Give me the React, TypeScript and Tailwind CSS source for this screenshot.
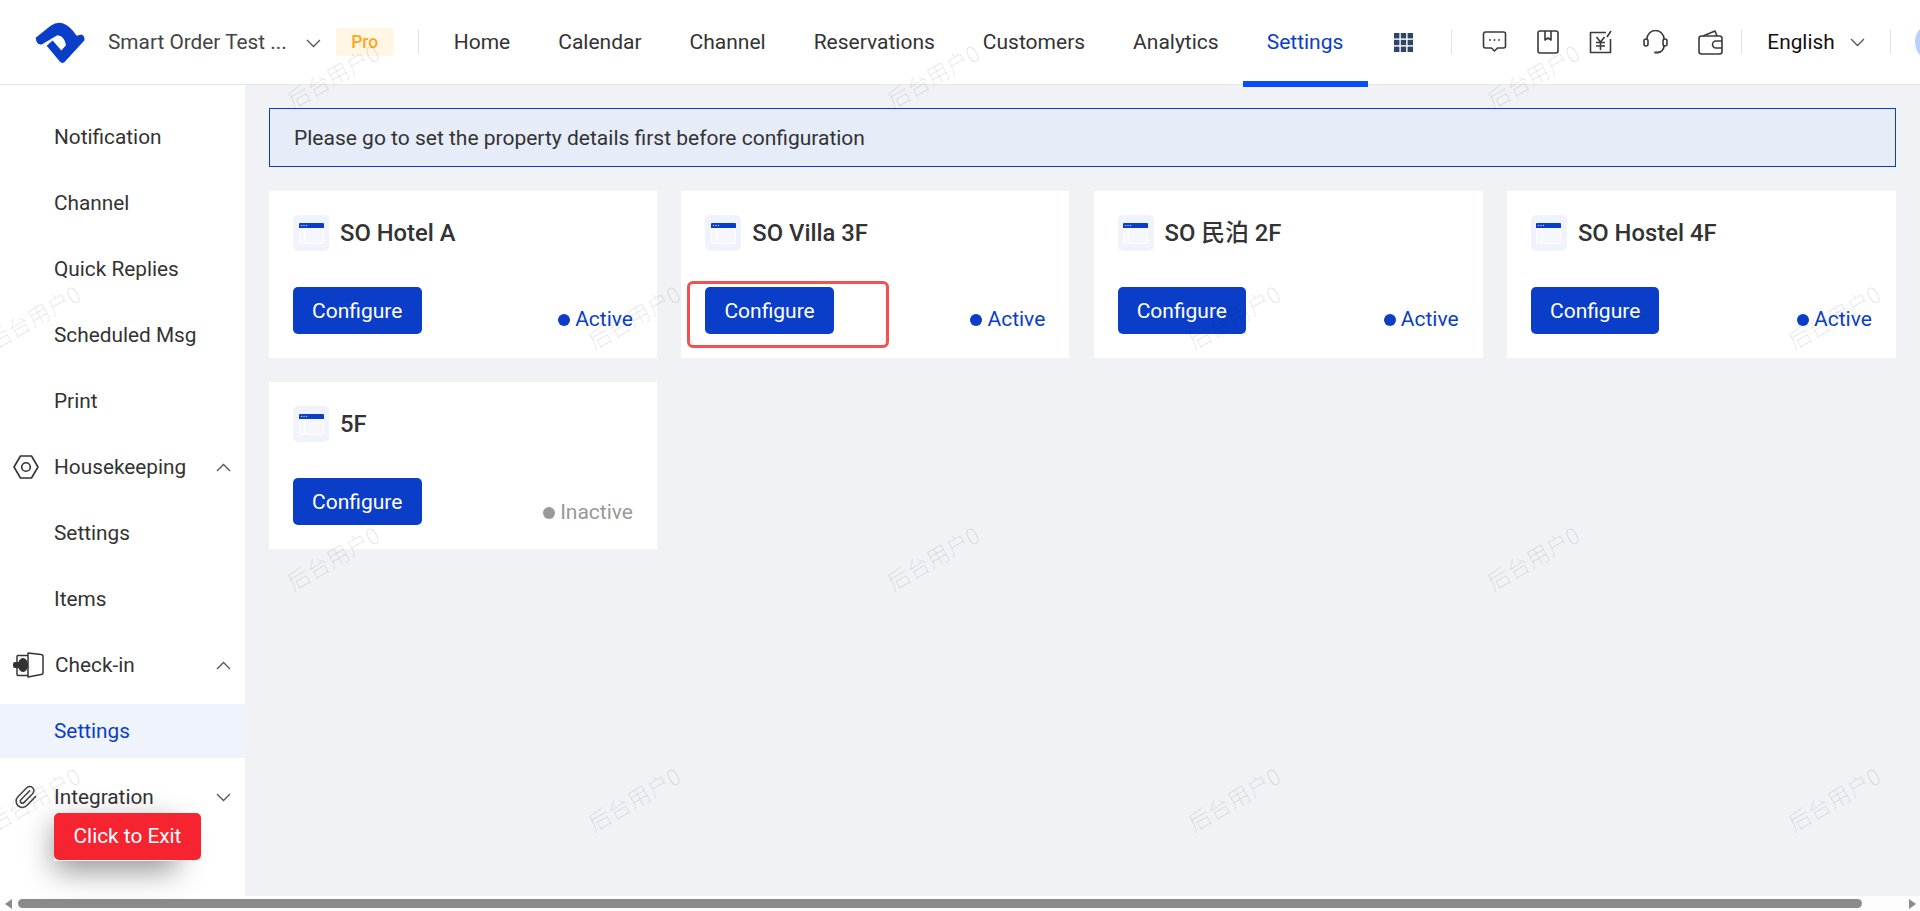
import React from "react";
import { Paperclip } from "lucide-react";

const Chev = ({ up = false, c = "#555" }: { up?: boolean; c?: string }) => (
  <svg width="15" height="9" viewBox="0 0 15 9" fill="none" className="shrink-0">
    <polyline points={up ? "1,8 7.5,1.5 14,8" : "1,1 7.5,7.5 14,1"} stroke={c} strokeWidth="1.3" />
  </svg>
);

const Logo = () => (
  <svg width="52" height="43" viewBox="42 30 156 128" className="shrink-0">
    <path
      fill="#0a3ec9"
      d="M47 80 L92 44 Q125 20 158 58 L170 74 L185 70 Q196 75 193 88 L133 153 Q126 158 120 152 L80 104 L98 88 L124 118 L138 102 Q132 72 112 72 L65 100 Q50 103 47 80 Z"
    />
  </svg>
);

const IC = "#3a3a3a";
const MsgIcon = () => (
  <svg width="25" height="24" viewBox="0 0 25 24" fill="none" stroke={IC} strokeWidth="1.6" strokeLinejoin="round">
    <path d="M3.5 2h18a2 2 0 0 1 2 2v12a2 2 0 0 1-2 2h-6l-3 3-3-3h-6a2 2 0 0 1-2-2V4a2 2 0 0 1 2-2z" />
    <circle cx="8" cy="10" r=".9" fill={IC} stroke="none" />
    <circle cx="12.5" cy="10" r=".9" fill={IC} stroke="none" />
    <circle cx="17" cy="10" r=".9" fill={IC} stroke="none" />
  </svg>
);
const BookIcon = () => (
  <svg width="22" height="24" viewBox="0 0 22 24" fill="none" stroke={IC} strokeWidth="1.6" strokeLinejoin="round">
    <rect x="1" y="1" width="20" height="22" rx="2" />
    <path d="M8 1v9l3-2 3 2V1" />
  </svg>
);
const YenIcon = () => (
  <svg width="24" height="24" viewBox="0 0 24 24" fill="none" stroke={IC} strokeWidth="1.6" strokeLinejoin="round">
    <path d="M17 2.500H1.500v20h20V9" />
    <path d="M18 7l4-6" />
    <path d="M7.500 7l4 5 4-5M7 12.500h9M7 16h9M11.500 12v8" />
  </svg>
);
const HeadsetIcon = () => (
  <svg width="25" height="24" viewBox="0 0 25 24" fill="none" stroke={IC} strokeWidth="1.6" strokeLinecap="round">
    <path d="M4 9a8.500 8.500 0 0 1 17 0" />
    <rect x="1" y="9" width="4" height="7" rx="2" />
    <rect x="20" y="9" width="4" height="7" rx="2" />
    <path d="M21 16a7 7 0 0 1-6 6.500h-3" strokeWidth="1.8" />
  </svg>
);
const WalletIcon = () => (
  <svg width="25" height="25" viewBox="0 0 25 25" fill="none" stroke={IC} strokeWidth="1.6" strokeLinejoin="round">
    <rect x="1" y="6" width="23" height="18" rx="2.500" />
    <path d="M5 6l12-5 2 5" />
    <path d="M24 11h-6a3.500 3.500 0 0 0 0 7h6" />
  </svg>
);

const Divider = ({ h = "h-[24px]" }: { h?: string }) => <div className={`w-px ${h} bg-[#e4e4e4] shrink-0`} />;

const HexIcon = () => (
  <svg width="26" height="25" viewBox="0 0 26 25" fill="none" stroke="#333" strokeWidth="1.6" strokeLinejoin="round">
    <path d="M7.500 1.500h11L25 12.500l-6.500 11h-11L1 12.500z" />
    <circle cx="13" cy="12.500" r="4.300" />
  </svg>
);
const CheckinIcon = () => (
  <svg width="31" height="27" viewBox="0 0 31 27" fill="none" stroke="#333" strokeWidth="1.5" strokeLinejoin="round">
    <path d="M15 4H5a1 1 0 0 0-1 1v18a1 1 0 0 0 1 1h10" />
    <path d="M15 1.500 L28 3a2 2 0 0 1 2 2v16a2 2 0 0 1-2 2L15 25.500z" fill="#fff" />
    <rect x="0" y="10.500" width="7" height="6" rx="2" fill="#333" stroke="none" />
    <ellipse cx="10" cy="13.500" rx="5" ry="7" fill="#333" stroke="none" />
  </svg>
);

const WindowIcon = () => (
  <div className="w-[36px] h-[36px] rounded-[5px] bg-[#f0f3fb] flex items-center justify-center shrink-0">
    <svg width="25" height="21" viewBox="0 0 25 21">
      <rect x=".5" y=".5" width="24" height="20" rx="1" fill="#f5f7fd" stroke="#ffffff" />
      <line x1="6" y1="5" x2="6" y2="20" stroke="#ffffff" />
      <path d="M0 5V1a1 1 0 0 1 1-1h23a1 1 0 0 1 1 1v4z" fill="#0a3ec9" />
      <circle cx="2.500" cy="2.500" r=".7" fill="#c8d4f4" />
      <circle cx="5" cy="2.500" r=".7" fill="#c8d4f4" />
      <circle cx="7.500" cy="2.500" r=".7" fill="#c8d4f4" />
    </svg>
  </div>
);

const NAV = ["Home", "Calendar", "Channel", "Reservations", "Customers", "Analytics", "Settings"];

const Header = () => (
  <header className="h-[85px] shrink-0 bg-white border-b border-[#e6e7ea] flex items-center relative overflow-hidden pl-[34px]">
    <Logo />
    <span className="ml-[22px] pt-[1px] text-[20.800px] text-[#444] whitespace-nowrap w-[179px]">Smart Order Test ...</span>
    <span className="ml-[19px] mt-[3px]"><Chev /></span>
    <span className="ml-[15px] w-[58px] h-[28px] rounded-[4px] bg-[#fff6e5] text-[#ffa71a] text-[17.500px] font-medium flex items-center justify-center shrink-0">Pro</span>
    <span className="ml-[24px]"><Divider /></span>
    <nav className="ml-[11px] flex items-center h-full shrink-0">
      {NAV.map((n) => (
        <div
          key={n}
          className={`relative h-full flex items-center px-[24px] pt-[1px] text-[21px] whitespace-nowrap ${n === "Settings" ? "text-[#0a3ec9]" : "text-[#333]"}`}
        >
          {n}
        </div>
      ))}
    </nav>
    <svg width="19" height="19" viewBox="0 0 19 19" className="ml-[27px] shrink-0" fill="#2d4566">
      {[0, 1, 2].flatMap((r) =>
        [0, 1, 2].map((c) => <rect key={`${r}${c}`} x={c * 6.8} y={r * 6.8} width="5.400" height="5.400" />)
      )}
    </svg>
    <span className="ml-[38px]"><Divider /></span>
    <div className="ml-[30px] flex items-center gap-[30px] shrink-0">
      <MsgIcon />
      <BookIcon />
      <YenIcon />
      <HeadsetIcon />
      <WalletIcon />
    </div>
    <span className="ml-[18px]"><Divider /></span>
    <span className="ml-[25px] pt-[1px] text-[20.800px] text-[#111] whitespace-nowrap">English</span>
    <span className="ml-[15px]"><Chev /></span>
    <span className="ml-[25px]"><Divider /></span>
    <div className="ml-[24px] w-[40px] h-[40px] rounded-full bg-[#b8d0fb] shrink-0" />
  </header>
);

const SIDE: { t: string; icon?: React.ReactNode; chev?: "up" | "down"; active?: boolean }[] = [
  { t: "Notification" },
  { t: "Channel" },
  { t: "Quick Replies" },
  { t: "Scheduled Msg" },
  { t: "Print" },
  { t: "Housekeeping", icon: <HexIcon />, chev: "up" },
  { t: "Settings" },
  { t: "Items" },
  { t: "Check-in", icon: <CheckinIcon />, chev: "up" },
  { t: "Settings", active: true },
  { t: "Integration", icon: <Paperclip size={25} color="#444" strokeWidth={1.5} />, chev: "down" },
];

const Sidebar = () => (
  <aside className="relative w-[245px] shrink-0 bg-white pt-[25px] flex flex-col gap-[12px] overflow-visible">
    {SIDE.map((s, i) => (
      <div
        key={i}
        className={`relative h-[54px] shrink-0 flex items-center pl-[54px] pr-[14px] pt-[1px] text-[20.800px] whitespace-nowrap ${s.active ? "bg-[#eff3fc] text-[#0a3ec9]" : "text-[#333]"}`}
      >
        {s.icon && <span className="absolute left-[13px] top-1/2 -translate-y-1/2 flex">{s.icon}</span>}
        <span className={s.t === "Check-in" ? "ml-[1px]" : ""}>{s.t}</span>
        {s.chev && (
          <span className="ml-auto flex">
            <Chev up={s.chev === "up"} />
          </span>
        )}
      </div>
    ))}
    <div className="absolute left-[54px] top-[728px] w-[123px] h-[48px] bg-white shadow-[0_10px_30px_rgba(0,0,0,0.42)]" />
    <div className="absolute left-[54px] top-[728px] w-[147px] h-[47px] rounded-[5px] bg-[#f62331] text-white text-[20.800px] flex items-center justify-center">
      Click to Exit
    </div>
  </aside>
);

const CARDS = [
  { t: "SO Hotel A", on: true },
  { t: "SO Villa 3F", on: true, mark: true },
  { t: "SO 民泊 2F", on: true },
  { t: "SO Hostel 4F", on: true },
  { t: "5F", on: false },
];

const Card = ({ t, on, mark }: { t: string; on: boolean; mark?: boolean }) => (
  <div className="relative h-[167px] bg-white p-[24px] flex flex-col">
    <div className="flex items-center gap-[11px]">
      <WindowIcon />
      <span className="text-[23.800px] font-medium text-[#333] leading-none whitespace-nowrap pt-[2px]">{t}</span>
    </div>
    <div className="mt-[36px] flex items-end justify-between">
      <button className="w-[128.500px] h-[47px] rounded-[5px] bg-[#0a3ec9] text-white text-[21px] flex items-center justify-center pt-[2px]">
        Configure
      </button>
      <span className={`flex items-center gap-[5px] text-[21px] leading-none ${on ? "text-[#0a3ec9] mb-[4px]" : "text-[#999] mb-[2px]"}`}>
        <span className={`w-[12px] h-[12px] rounded-full ${on ? "bg-[#0a3ec9]" : "bg-[#999]"}`} />
        {on ? "Active" : "Inactive"}
      </span>
    </div>
    {mark && (
      <div className="absolute left-[6px] top-[90px] w-[202px] h-[67px] border-[3.500px] border-[#f5504d] rounded-[6px]" />
    )}
  </div>
);

const MARKS: [number, number][] = [
  [333, 76], [933, 76], [1533, 76],
  [34, 317], [634, 317], [1234, 317], [1834, 317],
  [333, 558], [933, 558], [1533, 558],
  [34, 799], [634, 799], [1234, 799], [1834, 799],
];

export default function App() {
  return (
    <div
      className="relative w-[1920px] h-[911px] overflow-hidden flex flex-col bg-[#f0f2f6]"
      style={{ fontFamily: 'Roboto, "Noto Sans CJK SC", sans-serif' }}
    >
      <Header />
      <div className="absolute left-[1243px] top-[81px] w-[125px] h-[6px] bg-[#0a4dff]" />
      <div className="flex-1 flex min-h-0">
        <Sidebar />
        <main className="flex-1 pt-[23px] pl-[24px] pr-[24.500px]">
          <div className="h-[59px] border border-[#0a3ec9] bg-[#e6ecf8] flex items-center pl-[24px] pt-[2px] text-[21px] text-[#333]">
            Please go to set the property details first before configuration
          </div>
          <div className="mt-[24px] grid grid-cols-[388px_388px_389px_389px] gap-x-[24.300px] gap-y-[24px]">
            {CARDS.map((c) => (
              <Card key={c.t} {...c} />
            ))}
          </div>
        </main>
      </div>
      <div className="h-[15px] shrink-0 bg-[#fdfdfd] flex items-center pl-[5px] pr-[4px]">
        <svg width="7" height="10" viewBox="0 0 7 10" className="shrink-0"><path d="M7 0v10L0 5z" fill="#8a8a8a" /></svg>
        <div className="ml-[6px] w-[1844px] h-[9px] rounded-full bg-[#8a8a8a]" />
        <svg width="7" height="10" viewBox="0 0 7 10" className="ml-auto shrink-0"><path d="M0 0v10l7-5z" fill="#8a8a8a" /></svg>
      </div>
      {MARKS.map(([x, y]) => (
        <span
          key={`${x}-${y}`}
          className="absolute pointer-events-none text-[22.500px] text-[rgba(0,0,0,0.1)] whitespace-nowrap -translate-x-1/2 -translate-y-1/2 -rotate-[30deg]"
          style={{ left: x, top: y, fontFamily: '"Noto Sans CJK SC", sans-serif', fontWeight: 300 }}
        >
          后台用户0
        </span>
      ))}
    </div>
  );
}
